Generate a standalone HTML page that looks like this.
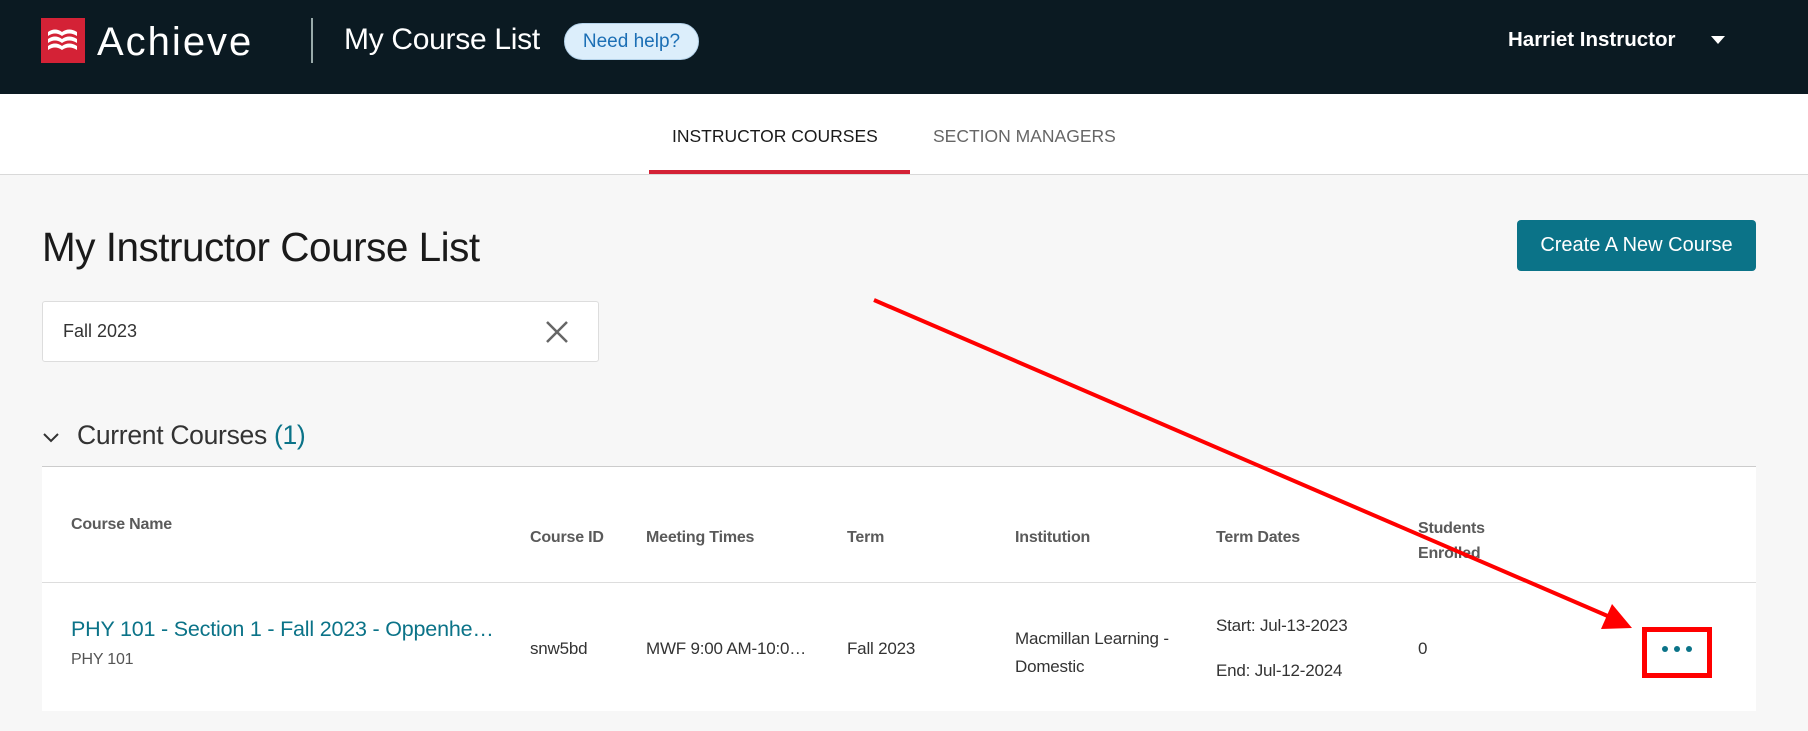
<!DOCTYPE html>
<html><head><meta charset="utf-8"><style>
*{margin:0;padding:0;box-sizing:border-box}
body{width:1808px;height:731px;overflow:hidden;background:#f7f7f7;font-family:"Liberation Sans",sans-serif;position:relative;color:#1a1a1a}
.a{position:absolute;white-space:nowrap}
.hdr{position:absolute;left:0;top:0;width:1808px;height:94px;background:#0b1a22}
.tabs{position:absolute;left:0;top:94px;width:1808px;height:81px;background:#fff;border-bottom:1px solid #d9d9d9}
.th{font-size:16px;font-weight:bold;color:#5a5a5a;letter-spacing:-.2px}
.td{font-size:17px;color:#333;letter-spacing:-.2px}
</style></head><body>
<div class="hdr"></div>
<div class="a" style="left:41px;top:18px;width:44px;height:45px;background:#d42236"></div>
<svg class="a" style="left:45px;top:26px" width="36" height="30" viewBox="0 0 36 30"><path d="M3 6 Q10 1 17 6 Q24 1 32 6 L32 10 Q24 5 17 10 Q10 5 3 10Z M3 13 Q10 8 17 13 Q24 8 32 13 L32 17 Q24 12 17 17 Q10 12 3 17Z M3 20 Q10 15 17 20 Q24 15 32 20 L32 24 Q24 19 17 24 Q10 19 3 24Z" fill="#fff"/></svg>
<div class="a" style="left:97px;top:20px;font-size:40px;color:#fff;letter-spacing:2px">Achieve</div>
<div class="a" style="left:311px;top:18px;width:2px;height:45px;background:#9aa"></div>
<div class="a" style="left:344px;top:23px;font-size:30px;color:#fff;letter-spacing:-.3px">My Course List</div>
<div class="a" style="left:564px;top:23px;width:135px;height:37px;border-radius:19px;background:#dceefb;border:1px solid #b5d3ea;color:#1c6fb5;font-size:19px;text-align:center;line-height:35px">Need help?</div>
<div class="a" style="left:1508px;top:28px;font-size:20.5px;color:#fff;font-weight:bold">Harriet Instructor</div>
<svg class="a" style="left:1711px;top:36px" width="14" height="9"><path d="M0 0H14L7 8Z" fill="#fff"/></svg>
<div class="tabs"></div>
<div class="a" style="left:672px;top:126px;font-size:17.5px;color:#1a1a1a">INSTRUCTOR COURSES</div>
<div class="a" style="left:649px;top:170px;width:261px;height:4px;background:#d42236"></div>
<div class="a" style="left:933px;top:126px;font-size:17.5px;color:#666">SECTION MANAGERS</div>
<div class="a" style="left:42px;top:224px;font-size:40.5px;color:#1a1a1a;letter-spacing:-.5px">My Instructor Course List</div>
<div class="a" style="left:1517px;top:220px;width:239px;height:51px;background:#0b7388;border-radius:4px;color:#fff;font-size:20px;text-align:center;line-height:51px">Create A New Course</div>
<div class="a" style="left:42px;top:301px;width:557px;height:61px;background:#fff;border:1px solid #ddd;border-radius:3px"></div>
<div class="a" style="left:63px;top:321px;font-size:18px;color:#333">Fall 2023</div>
<svg class="a" style="left:545px;top:320px" width="24" height="24"><path d="M2 2L22 22M22 2L2 22" stroke="#666" stroke-width="2.5"/></svg>
<svg class="a" style="left:43px;top:433px" width="16" height="10"><path d="M1 1L8 8L15 1" stroke="#333" stroke-width="2" fill="none"/></svg>
<div class="a" style="left:77px;top:420px;font-size:26.5px;color:#333;letter-spacing:-.3px">Current Courses <span style="color:#0b7388">(1)</span></div>
<div class="a" style="left:42px;top:466px;width:1714px;height:1px;background:#ccc"></div>
<div class="a" style="left:42px;top:467px;width:1714px;height:244px;background:#fff"></div>
<div class="a" style="left:42px;top:582px;width:1714px;height:1px;background:#ddd"></div>
<div class="a th" style="left:71px;top:516px">Course Name</div>
<div class="a th" style="left:530px;top:529px">Course ID</div>
<div class="a th" style="left:646px;top:529px">Meeting Times</div>
<div class="a th" style="left:847px;top:529px">Term</div>
<div class="a th" style="left:1015px;top:529px">Institution</div>
<div class="a th" style="left:1216px;top:529px">Term Dates</div>
<div class="a th" style="left:1418px;top:516px;line-height:25px">Students<br>Enrolled</div>
<div class="a" style="left:71px;top:617px;font-size:21.5px;color:#0b7388;letter-spacing:-.2px">PHY 101 - Section 1 - Fall 2023 - Oppenhe…</div>
<div class="a td" style="left:71px;top:651px;font-size:16px;color:#555">PHY 101</div>
<div class="a td" style="left:530px;top:639px">snw5bd</div>
<div class="a td" style="left:646px;top:639px">MWF 9:00 AM-10:0…</div>
<div class="a td" style="left:847px;top:639px">Fall 2023</div>
<div class="a td" style="left:1015px;top:625px;line-height:28px">Macmillan Learning -<br>Domestic</div>
<div class="a td" style="left:1216px;top:616px">Start: Jul-13-2023</div>
<div class="a td" style="left:1216px;top:661px">End: Jul-12-2024</div>
<div class="a td" style="left:1418px;top:639px">0</div>
<svg class="a" style="left:1660px;top:644px" width="36" height="10"><circle cx="5" cy="5" r="3" fill="#0b7388"/><circle cx="17" cy="5" r="3" fill="#0b7388"/><circle cx="29" cy="5" r="3" fill="#0b7388"/></svg>
<div class="a" style="left:1642px;top:627px;width:70px;height:51px;border:5px solid #f00"></div>
<svg class="a" style="left:0;top:0" width="1808" height="731"><line x1="874" y1="300" x2="1610" y2="617" stroke="#f00" stroke-width="4"/><path d="M1632 628 L1601 629 L1612 604 Z" fill="#f00"/></svg>
</body></html>
